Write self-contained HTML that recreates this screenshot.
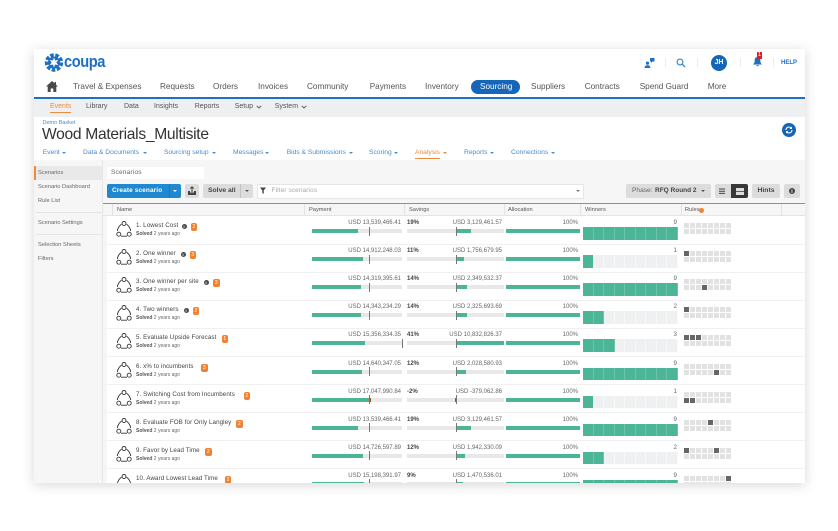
<!DOCTYPE html>
<html><head><meta charset="utf-8"><title>Coupa</title>
<style>
html,body{margin:0;padding:0;background:#fff;width:838px;height:531px;overflow:hidden}
body{font-family:"Liberation Sans",sans-serif;color:#555;position:relative}
#card{position:absolute;left:34px;top:49px;width:771px;height:434px;background:#fff;box-shadow:0 2px 12px rgba(0,0,0,.16)}
#v{position:absolute;left:0;top:0;width:838px;height:483px;overflow:hidden;filter:blur(.35px)}
#v div,#v span,#v svg{position:absolute}
.t{white-space:nowrap;line-height:10px;height:10px}
.nv{top:82px;font-size:8.2px;color:#555}
.sn{top:102px;font-size:7px;color:#555}
.st{top:147.5px;font-size:6.7px;color:#4a8ccb}
.c{width:0;height:0;border-left:2px solid transparent;border-right:2px solid transparent;border-top:2.5px solid #4a8ccb;top:152px}
.sb{left:38px;font-size:5.7px;color:#666}
.hr{left:36px;width:66px;height:1px;background:#e6e6e6}
.hd{top:205px;font-size:5.7px;color:#555}
.vs{top:204px;width:1px;height:11px;background:#e2e2e2}
.btn{background:#dcdcdc;border-radius:2px;top:184px;height:14px}
.r{left:0;width:838px;height:28px}
.l{left:107px;width:698px;top:27.5px;height:1px;background:#f0f0f0}
.n{left:136px;top:5px;font-size:6.2px;color:#444;letter-spacing:.1px}
.s{left:136px;top:13px;font-size:5px;color:#666}
.s b{color:#555}
.ic{left:116px;top:5px;width:18px;height:18px}
.bd{top:7px;width:6.5px;height:8px;background:#f08232;border-radius:2px;color:#fff;font-size:5px;line-height:8px;text-align:center}
.in{top:8px;width:5px;height:5px;background:#4a4a4a;border-radius:50%;color:#fff;font-size:4px;line-height:5px;text-align:center;font-weight:bold}
.u1{right:437px;top:2px;font-size:6px;color:#666}
.u2{right:336px;top:2px;font-size:6px;color:#666}
.p{left:407px;top:2px;font-size:6px;font-weight:bold;color:#444}
.a{right:260px;top:2px;font-size:6px;color:#666}
.b1{left:312px;width:90px;top:13px;height:4px;background:#e8e8e8}
.b2{left:407px;width:97px;top:13px;height:4px;background:#e8e8e8}
.b3{left:506px;width:74px;top:13px;height:4px;background:#4db597}
.g{top:0;left:0;height:4px;background:#4db597}
.m{width:1px;top:10.5px;height:9px;background:#777}
.ct{right:161px;top:2px;font-size:6.2px;color:#666}
.w{left:583.3px;width:94.5px;top:11px;height:12.5px;background:repeating-linear-gradient(90deg,#eff0f1 0 10px,#fff 10px 10.5px)}
.wg{left:0;top:0;height:12.5px;background:repeating-linear-gradient(90deg,#4db597 0 10px,#8fd0bd 10px 10.5px)}
.ru{left:684px;top:7px;width:48px;height:11px}
.rr{left:0;width:48px;height:5px;background:repeating-linear-gradient(90deg,#e2e2e2 0 5px,#fff 5px 6px)}
.dk{width:5px;height:5px;background:#666}
</style></head><body>
<svg width="0" height="0" style="position:absolute"><defs><symbol id="sc" viewBox="0 0 18 18"><g fill="none" stroke="#333" stroke-width=".9"><circle cx="8" cy="2.5" r="2"/><circle cx="2.8" cy="13.2" r="2"/><circle cx="13.2" cy="13.2" r="2"/><path d="M5.4 3.200C3.400 4.600 1.800 7 1.300 10M10.600 3.200C12.600 4.600 14.200 7 14.700 10M5 15.200h6"/></g></symbol></defs></svg>
<div id="card"></div>
<div id="v">
<!-- logo -->
<svg style="left:44px;top:53px" width="20" height="19" viewBox="0 0 20 19"><circle cx="10" cy="9.500" r="6.200" fill="none" stroke="#1f6fc4" stroke-width="6" stroke-dasharray="3 1.300"/><circle cx="10" cy="9.500" r="6" fill="#1f6fc4"/><path fill="#fff" d="M10 4.500l1.100 3 3.200-.6-2 2.600 2 2.600-3.200-.6-1.100 3-1.100-3-3.200.6 2-2.600-2-2.600 3.200.6z"/></svg>
<div class="t" style="left:64px;top:54.500px;font-size:17px;line-height:14px;height:14px;font-weight:bold;color:#1f6fc4;letter-spacing:-.5px;transform:scaleX(.86);transform-origin:left center">coupa</div>
<!-- top right -->
<svg style="left:644px;top:58px" width="11" height="10" viewBox="0 0 11 10"><path fill="#1f6fc4" d="M6 0h4.500v3.500H8.500L7 5V3.500H6zM3.500 3.500a1.600 1.600 0 110 3.200 1.600 1.600 0 010-3.200zM.6 10c0-2 1.200-2.800 2.900-2.800S6.400 8 6.400 10z"/></svg>
<div style="left:665px;top:58px;width:1px;height:9px;background:#ececec"></div>
<svg style="left:676px;top:58px" width="10" height="10" viewBox="0 0 10 10"><circle cx="4" cy="4" r="2.900" fill="none" stroke="#3a84cc" stroke-width="1.100"/><path d="M6.200 6.200L9 9" stroke="#3a84cc" stroke-width="1.300"/></svg>
<div style="left:697px;top:58px;width:1px;height:9px;background:#ececec"></div>
<div class="t" style="left:711px;top:55px;width:16px;height:16px;border-radius:50%;background:#1565b8;color:#fff;font-size:7px;font-weight:bold;line-height:16px;text-align:center">JH</div>
<div style="left:740px;top:58px;width:1px;height:9px;background:#ececec"></div>
<svg style="left:752.500px;top:57px" width="9" height="10" viewBox="0 0 9 10"><path fill="#1f6fc4" d="M4.500 0c2 0 2.800 1.500 2.800 3.500 0 2 .7 3 1.700 4H0c1-1 1.700-2 1.700-4C1.700 1.500 2.500 0 4.500 0zM3 8.300h3C6 9.500 3 9.500 3 8.300z"/></svg>
<div class="t" style="left:757px;top:52px;width:5px;height:7px;background:#e02020;color:#fff;font-size:5px;line-height:7px;font-weight:bold;text-align:center">1</div>
<div style="left:773px;top:58px;width:1px;height:9px;background:#ececec"></div>
<div class="t" style="left:781px;top:58px;font-size:6px;font-weight:bold;color:#1f6fc4">HELP</div>
<!-- nav -->
<svg style="left:46px;top:81px" width="12" height="11" viewBox="0 0 12 11"><path fill="#4a4a4a" d="M6 0L0 5.500h1.700V11h3V7.500h2.600V11h3V5.500H12L10 3.700V1H8.500v1.300z"/></svg>
<div class="t nv" style="left:73px">Travel &amp; Expenses</div>
<div class="t nv" style="left:160px">Requests</div>
<div class="t nv" style="left:213px">Orders</div>
<div class="t nv" style="left:258px">Invoices</div>
<div class="t nv" style="left:307px">Community</div>
<div class="t nv" style="left:369.700px">Payments</div>
<div class="t nv" style="left:425px">Inventory</div>
<div style="left:471px;top:79.500px;width:49px;height:14.500px;border-radius:8px;background:#1565b8"></div>
<div class="t nv" style="left:480px;color:#fff">Sourcing</div>
<div class="t nv" style="left:531px">Suppliers</div>
<div class="t nv" style="left:584.700px">Contracts</div>
<div class="t nv" style="left:639.700px">Spend Guard</div>
<div class="t nv" style="left:707.700px">More</div>
<div style="left:34px;top:96.500px;width:771px;height:2px;background:#1f6fc4"></div>
<!-- subnav -->
<div style="left:34px;top:98.500px;width:771px;height:18.500px;background:#eeeff0"></div>
<div class="t sn" style="left:50px;color:#ee8a3c">Events</div>
<div style="left:50px;top:111.500px;width:21px;height:1px;background:#ee8a3c"></div>
<div class="t sn" style="left:86px">Library</div>
<div class="t sn" style="left:124px">Data</div>
<div class="t sn" style="left:154px">Insights</div>
<div class="t sn" style="left:194.700px">Reports</div>
<div class="t sn" style="left:234.700px">Setup</div>
<svg style="left:256px;top:105px" width="6" height="4" viewBox="0 0 6 4"><path d="M.7.8L3 3 5.300.8" fill="none" stroke="#555" stroke-width=".9"/></svg>
<div class="t sn" style="left:274.700px">System</div>
<svg style="left:301px;top:105px" width="6" height="4" viewBox="0 0 6 4"><path d="M.7.8L3 3 5.300.8" fill="none" stroke="#555" stroke-width=".9"/></svg>
<!-- title -->
<div class="t" style="left:42.500px;top:118px;font-size:5.500px;color:#4a8ccb">Demo Basket</div>
<div class="t" style="left:42px;top:125px;font-size:15.600px;letter-spacing:-.3px;line-height:20px;height:20px;color:#333">Wood Materials_Multisite</div>
<div style="left:782px;top:123px;width:14px;height:14px;border-radius:50%;background:#1565b8"></div>
<svg style="left:785px;top:126px" width="8" height="8" viewBox="0 0 8 8"><path d="M1 4a3 3 0 015-2.200M7 4a3 3 0 01-5 2.200" fill="none" stroke="#fff" stroke-width="1.100"/><path fill="#fff" d="M7 .5v2.500H4.500zM1 7.500V5h2.500z"/></svg>
<div class="t st" style="left:42.700px">Event</div><div class="c" style="left:62px"></div>
<div class="t st" style="left:83px">Data &amp; Documents</div><div class="c" style="left:143px"></div>
<div class="t st" style="left:164px">Sourcing setup</div><div class="c" style="left:212px"></div>
<div class="t st" style="left:233px">Messages</div><div class="c" style="left:265px"></div>
<div class="t st" style="left:286.700px">Bids &amp; Submissions</div><div class="c" style="left:349px"></div>
<div class="t st" style="left:369px">Scoring</div><div class="c" style="left:394px"></div>
<div class="t st" style="left:415px;color:#ee8a3c">Analysis</div><div class="c" style="left:443px;border-top-color:#ee8a3c"></div>
<div style="left:415px;top:158px;width:25px;height:1px;background:#ee8a3c"></div>
<div class="t st" style="left:464px">Reports</div><div class="c" style="left:490px"></div>
<div class="t st" style="left:511px">Connections</div><div class="c" style="left:551px"></div>
<!-- body bg -->
<div style="left:34px;top:159.500px;width:771px;height:324px;background:#f6f6f6"></div>
<div style="left:102px;top:160px;width:1px;height:323px;background:#e6e6e6"></div>
<!-- sidebar -->
<div style="left:34px;top:166px;width:68px;height:14px;background:#e9e9e9"></div>
<div style="left:34px;top:166px;width:2px;height:14px;background:#ee8a3c"></div>
<div class="t sb" style="top:168px">Scenarios</div>
<div class="t sb" style="top:182px">Scenario Dashboard</div>
<div class="t sb" style="top:196px">Rule List</div>
<div class="hr" style="top:212px"></div>
<div class="t sb" style="top:218px">Scenario Settings</div>
<div class="hr" style="top:234px"></div>
<div class="t sb" style="top:240px">Selection Sheets</div>
<div class="t sb" style="top:254px">Filters</div>
<!-- tab -->
<div style="left:107px;top:167px;width:97px;height:12px;background:#fff"></div>
<div class="t" style="left:111px;top:168px;font-size:6.500px;color:#666;letter-spacing:.2px">Scenarios</div>
<!-- toolbar -->
<div style="left:107px;top:184px;width:74px;height:14px;background:#1f88d0;border-radius:2px"></div>
<div style="left:168.500px;top:184px;width:1px;height:14px;background:#157ac0"></div>
<div class="t" style="left:112px;top:186px;font-size:6.500px;font-weight:bold;color:#fff;letter-spacing:.1px">Create scenario</div>
<div class="c" style="left:173px;top:190px;border-top-color:#fff"></div>
<div class="btn" style="left:185px;width:14px"></div>
<svg style="left:187px;top:186px" width="10" height="10" viewBox="0 0 10 10"><path d="M5 6V1M3.300 2.500L5 .8l1.700 1.700" fill="none" stroke="#444" stroke-width="1"/><path d="M1 5h2v1.500h4V5h2v4H1z" fill="#444"/></svg>
<div class="btn" style="left:203px;width:50px"></div>
<div style="left:240px;top:184px;width:1px;height:14px;background:#c2c2c2"></div>
<div class="t" style="left:208px;top:186px;font-size:6.800px;font-weight:bold;color:#444">Solve all</div>
<div class="c" style="left:244.500px;top:190px;border-top-color:#555"></div>
<div style="left:257px;top:184px;width:325px;height:13px;background:#fff;border:1px solid #e6e6e6;box-sizing:content-box"></div>
<svg style="left:260px;top:187px" width="6" height="7" viewBox="0 0 6 7"><path fill="#444" d="M0 .5h6L3.700 3.500V7L2.300 6V3.500z"/></svg>
<div class="t" style="left:271.500px;top:186px;font-size:6.500px;color:#aaa;letter-spacing:.1px">Filter scenarios</div>
<div class="c" style="left:575.500px;top:190px;border-top-color:#777"></div>
<div class="btn" style="left:626px;width:85px"></div>
<div class="t" style="left:632px;top:186px;font-size:6.600px;color:#666">Phase:</div>
<div class="t" style="left:655px;top:186px;font-size:6.500px;font-weight:bold;color:#444">RFQ Round 2</div>
<div class="c" style="left:701px;top:190px;border-top-color:#555"></div>
<div class="btn" style="left:715px;width:16px;border-radius:2px 0 0 2px"></div>
<svg style="left:719px;top:187.500px" width="7" height="7" viewBox="0 0 7 7"><path d="M0 1h6M0 3.200h6M0 5.400h6" stroke="#444" stroke-width="1"/></svg>
<div class="btn" style="left:731px;width:17px;background:#383838;border-radius:0 2px 2px 0"></div>
<svg style="left:735.500px;top:187.500px" width="8" height="7" viewBox="0 0 8 7"><path fill="#ddd" d="M0 0h8v3H0zM0 3.800h8V7H0z"/></svg>
<div class="btn" style="left:752px;width:28px"></div>
<div class="t" style="left:757.500px;top:186px;font-size:6.800px;font-weight:bold;color:#444">Hints</div>
<div class="btn" style="left:784px;width:16px"></div>
<div style="left:789px;top:188px;width:6px;height:6px;background:#444;border-radius:50%"></div>
<div class="t" style="left:789px;top:186.500px;width:6px;text-align:center;font-size:5px;color:#fff;font-weight:bold">i</div>
<!-- table -->
<div style="left:103px;top:203px;width:702px;height:1px;background:#5b9bd5"></div>
<div style="left:107px;top:204px;width:698px;height:279px;background:#fff"></div>
<div style="left:103px;top:204px;width:702px;height:11px;background:#f6f6f6;border-bottom:1px solid #e4e4e4;box-sizing:content-box"></div>
<div class="vs" style="left:112px"></div>
<div class="vs" style="left:304px"></div>
<div class="vs" style="left:404px"></div>
<div class="vs" style="left:504px"></div>
<div class="vs" style="left:580px"></div>
<div class="vs" style="left:680.500px"></div>
<div class="vs" style="left:780.500px"></div>
<div class="t hd" style="left:117px">Name</div>
<div class="t hd" style="left:309px">Payment</div>
<div class="t hd" style="left:409px">Savings</div>
<div class="t hd" style="left:508px">Allocation</div>
<div class="t hd" style="left:585px">Winners</div>
<div class="t hd" style="left:685px">Rules</div>
<div style="left:698.500px;top:207.500px;width:5px;height:5px;border-radius:50%;background:#f08232"></div>

<div class="r" style="top:216px"><div class="l"></div><svg class="ic"><use href="#sc"/></svg>
<div class="t n">1. Lowest Cost</div><div class="t s"><b>Solved</b> 2 years ago</div><div class="in" style="left:181.500px">i</div><div class="bd" style="left:190.500px">2</div>
<div class="t u1">USD 13,539,466.41</div><div class="b1"><div class="g" style="width:46px"></div></div><div class="m" style="left:369px"></div>
<div class="t p">19%</div><div class="t u2">USD 3,129,461.57</div><div class="b2"><div class="g" style="left:49px;width:15px"></div></div><div class="m" style="left:456px"></div>
<div class="t a">100%</div><div class="b3"></div>
<div class="t ct">9</div><div class="w"><div class="wg" style="width:94.500px"></div></div>
<div class="ru"><div class="rr" style="top:0"></div><div class="rr" style="top:6px"></div></div></div>

<div class="r" style="top:244.100px"><div class="l"></div><svg class="ic"><use href="#sc"/></svg>
<div class="t n">2. One winner</div><div class="t s"><b>Solved</b> 2 years ago</div><div class="in" style="left:180.500px">i</div><div class="bd" style="left:189.500px">3</div>
<div class="t u1">USD 14,912,248.03</div><div class="b1"><div class="g" style="width:51px"></div></div><div class="m" style="left:369px"></div>
<div class="t p">11%</div><div class="t u2">USD 1,756,679.95</div><div class="b2"><div class="g" style="left:49px;width:8px"></div></div><div class="m" style="left:456px"></div>
<div class="t a">100%</div><div class="b3"></div>
<div class="t ct">1</div><div class="w"><div class="wg" style="width:10px"></div></div>
<div class="ru"><div class="rr" style="top:0"></div><div class="rr" style="top:6px"></div><div class="dk" style="left:0;top:0"></div></div></div>

<div class="r" style="top:272.200px"><div class="l"></div><svg class="ic"><use href="#sc"/></svg>
<div class="t n">3. One winner per site</div><div class="t s"><b>Solved</b> 2 years ago</div><div class="in" style="left:203.500px">i</div><div class="bd" style="left:213px">3</div>
<div class="t u1">USD 14,319,395.61</div><div class="b1"><div class="g" style="width:49px"></div></div><div class="m" style="left:369px"></div>
<div class="t p">14%</div><div class="t u2">USD 2,349,532.37</div><div class="b2"><div class="g" style="left:49px;width:11px"></div></div><div class="m" style="left:456px"></div>
<div class="t a">100%</div><div class="b3"></div>
<div class="t ct">9</div><div class="w"><div class="wg" style="width:94.500px"></div></div>
<div class="ru"><div class="rr" style="top:0"></div><div class="rr" style="top:6px"></div><div class="dk" style="left:18px;top:6px"></div></div></div>

<div class="r" style="top:300.300px"><div class="l"></div><svg class="ic"><use href="#sc"/></svg>
<div class="t n">4. Two winners</div><div class="t s"><b>Solved</b> 2 years ago</div><div class="in" style="left:183.500px">i</div><div class="bd" style="left:192.500px">2</div>
<div class="t u1">USD 14,343,234.29</div><div class="b1"><div class="g" style="width:49px"></div></div><div class="m" style="left:369px"></div>
<div class="t p">14%</div><div class="t u2">USD 2,325,693.69</div><div class="b2"><div class="g" style="left:49px;width:11px"></div></div><div class="m" style="left:456px"></div>
<div class="t a">100%</div><div class="b3"></div>
<div class="t ct">2</div><div class="w"><div class="wg" style="width:21px"></div></div>
<div class="ru"><div class="rr" style="top:0"></div><div class="rr" style="top:6px"></div><div class="dk" style="left:0;top:0"></div></div></div>

<div class="r" style="top:328.400px"><div class="l"></div><svg class="ic"><use href="#sc"/></svg>
<div class="t n">5. Evaluate Upside Forecast</div><div class="t s"><b>Solved</b> 2 years ago</div><div class="bd" style="left:221.500px">1</div>
<div class="t u1">USD 15,356,334.35</div><div class="b1"><div class="g" style="width:53px"></div></div><div class="m" style="left:401.500px"></div>
<div class="t p">41%</div><div class="t u2">USD 10,832,826.37</div><div class="b2"><div class="g" style="left:49px;width:48px"></div></div><div class="m" style="left:456px"></div>
<div class="t a">100%</div><div class="b3"></div>
<div class="t ct">3</div><div class="w"><div class="wg" style="width:31.500px"></div></div>
<div class="ru"><div class="rr" style="top:0"></div><div class="rr" style="top:6px"></div><div class="dk" style="left:0;top:0"></div><div class="dk" style="left:6px;top:0"></div><div class="dk" style="left:12px;top:0"></div></div></div>

<div class="r" style="top:356.500px"><div class="l"></div><svg class="ic"><use href="#sc"/></svg>
<div class="t n">6. x% to incumbents</div><div class="t s"><b>Solved</b> 2 years ago</div><div class="bd" style="left:201px">3</div>
<div class="t u1">USD 14,640,347.05</div><div class="b1"><div class="g" style="width:50px"></div></div><div class="m" style="left:369px"></div>
<div class="t p">12%</div><div class="t u2">USD 2,028,580.93</div><div class="b2"><div class="g" style="left:49px;width:10px"></div></div><div class="m" style="left:456px"></div>
<div class="t a">100%</div><div class="b3"></div>
<div class="t ct">9</div><div class="w"><div class="wg" style="width:94.500px"></div></div>
<div class="ru"><div class="rr" style="top:0"></div><div class="rr" style="top:6px"></div><div class="dk" style="left:30px;top:6px"></div></div></div>

<div class="r" style="top:384.600px"><div class="l"></div><svg class="ic"><use href="#sc"/></svg>
<div class="t n">7. Switching Cost from Incumbents</div><div class="t s"><b>Solved</b> 2 years ago</div><div class="bd" style="left:243.500px">2</div>
<div class="t u1">USD 17,047,990.84</div><div class="b1"><div class="g" style="width:57px"></div><div class="g" style="left:57px;width:2px;background:#d9381e"></div></div><div class="m" style="left:369px"></div>
<div class="t p">-2%</div><div class="t u2">USD -379,062.86</div><div class="b2"><div class="g" style="left:48px;width:2px;background:#d9381e"></div></div><div class="m" style="left:456px"></div>
<div class="t a">100%</div><div class="b3"></div>
<div class="t ct">1</div><div class="w"><div class="wg" style="width:10px"></div></div>
<div class="ru"><div class="rr" style="top:0"></div><div class="rr" style="top:6px"></div><div class="dk" style="left:0;top:6px"></div><div class="dk" style="left:6px;top:6px"></div></div></div>

<div class="r" style="top:412.700px"><div class="l"></div><svg class="ic"><use href="#sc"/></svg>
<div class="t n">8. Evaluate FOB for Only Langley</div><div class="t s"><b>Solved</b> 2 years ago</div><div class="bd" style="left:236px">2</div>
<div class="t u1">USD 13,539,466.41</div><div class="b1"><div class="g" style="width:46px"></div></div><div class="m" style="left:369px"></div>
<div class="t p">19%</div><div class="t u2">USD 3,129,461.57</div><div class="b2"><div class="g" style="left:49px;width:15px"></div></div><div class="m" style="left:456px"></div>
<div class="t a">100%</div><div class="b3"></div>
<div class="t ct">9</div><div class="w"><div class="wg" style="width:94.500px"></div></div>
<div class="ru"><div class="rr" style="top:0"></div><div class="rr" style="top:6px"></div><div class="dk" style="left:24px;top:0"></div></div></div>

<div class="r" style="top:440.800px"><div class="l"></div><svg class="ic"><use href="#sc"/></svg>
<div class="t n">9. Favor by Lead Time</div><div class="t s"><b>Solved</b> 2 years ago</div><div class="bd" style="left:205px">2</div>
<div class="t u1">USD 14,726,597.89</div><div class="b1"><div class="g" style="width:50.500px"></div></div><div class="m" style="left:369px"></div>
<div class="t p">12%</div><div class="t u2">USD 1,942,330.09</div><div class="b2"><div class="g" style="left:49px;width:9px"></div></div><div class="m" style="left:456px"></div>
<div class="t a">100%</div><div class="b3"></div>
<div class="t ct">2</div><div class="w"><div class="wg" style="width:21px"></div></div>
<div class="ru"><div class="rr" style="top:0"></div><div class="rr" style="top:6px"></div><div class="dk" style="left:0;top:0"></div><div class="dk" style="left:30px;top:0"></div></div></div>

<div class="r" style="top:468.900px"><svg class="ic"><use href="#sc"/></svg>
<div class="t n">10. Award Lowest Lead Time</div><div class="t s"><b>Solved</b> 2 years ago</div><div class="bd" style="left:224.800px">2</div>
<div class="t u1">USD 15,198,391.97</div><div class="b1"><div class="g" style="width:52px"></div></div><div class="m" style="left:369px"></div>
<div class="t p">9%</div><div class="t u2">USD 1,470,536.01</div><div class="b2"><div class="g" style="left:49px;width:7px"></div></div><div class="m" style="left:456px"></div>
<div class="t a">100%</div><div class="b3"></div>
<div class="t ct">9</div><div class="w"><div class="wg" style="width:94.500px"></div></div>
<div class="ru"><div class="rr" style="top:0"></div><div class="rr" style="top:6px"></div><div class="dk" style="left:42px;top:0"></div></div></div>
</div>
</body></html>
